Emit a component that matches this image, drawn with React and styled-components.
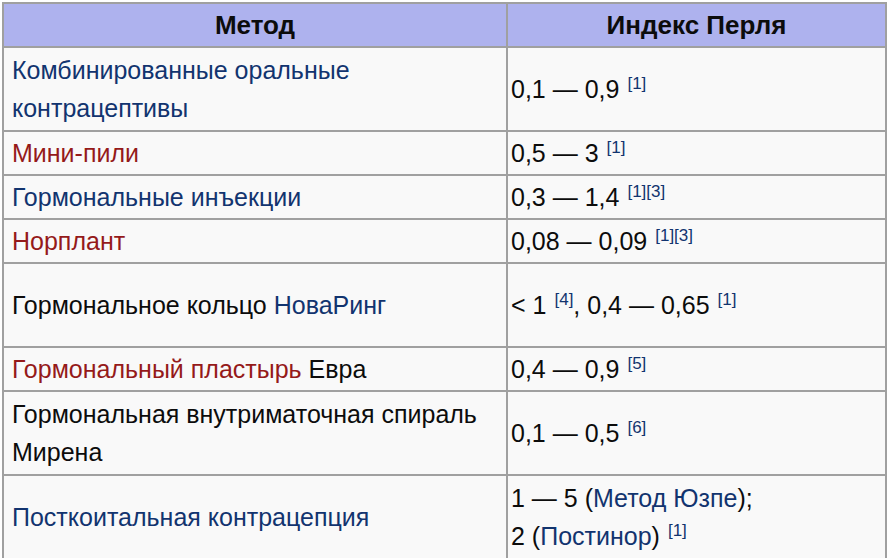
import React from 'react'
import styled, { createGlobalStyle } from 'styled-components'

const GlobalStyle = createGlobalStyle`
  html, body {
    margin: 0;
    padding: 0;
    background: #ffffff;
  }
  body {
    font-family: "Liberation Sans", Arial, sans-serif;
  }
`

const Table = styled.table`
  margin: 2px 0 0 2px;
  width: 885px;
  border-collapse: collapse;
  background: #f9f9f9;
  color: #0c0c0c;
  font-size: 25px;
  line-height: 38px;
`

const HeadCell = styled.th`
  background: #aeb2ee;
  border: 2px solid #a0a0a0;
  font-size: 26px;
  font-weight: bold;
  text-align: center;
  padding: 0 8px;
  width: ${p => p.width || 'auto'};
`

const Row = styled.tr`
  height: ${p => (p.tall ? '84px' : '44px')};
`

const Cell = styled.td`
  border: 2px solid #a0a0a0;
  padding: 1px ${p => (p.narrow ? '3px' : '8px')};
  vertical-align: middle;
  text-align: left;
`

const Link = styled.span`
  color: ${p => (p.missing ? '#951a1a' : '#12346f')};
`

const Ref = styled.sup`
  color: #12346f;
  font-size: 17px;
  line-height: 0;
  vertical-align: 9px;
  margin-left: 8px;
`

const rows = [
  {
    method: <Link>Комбинированные оральные контрацептивы</Link>,
    index: <>0,1 — 0,9<Ref>[1]</Ref></>,
    tall: true
  },
  {
    method: <Link missing>Мини-пили</Link>,
    index: <>0,5 — 3<Ref>[1]</Ref></>
  },
  {
    method: <Link>Гормональные инъекции</Link>,
    index: <>0,3 — 1,4<Ref>[1][3]</Ref></>
  },
  {
    method: <Link missing>Норплант</Link>,
    index: <>0,08 — 0,09<Ref>[1][3]</Ref></>
  },
  {
    method: <>Гормональное кольцо <Link>НоваРинг</Link></>,
    index: <>&lt; 1<Ref>[4]</Ref>, 0,4 — 0,65<Ref>[1]</Ref></>,
    tall: true
  },
  {
    method: <><Link missing>Гормональный пластырь</Link> Евра</>,
    index: <>0,4 — 0,9<Ref>[5]</Ref></>
  },
  {
    method: <>Гормональная внутриматочная спираль Мирена</>,
    index: <>0,1 — 0,5<Ref>[6]</Ref></>,
    tall: true
  },
  {
    method: <Link>Посткоитальная контрацепция</Link>,
    index: <>1 — 5 (<Link>Метод Юзпе</Link>);<br />2 (<Link>Постинор</Link>)<Ref>[1]</Ref></>,
    tall: true
  }
]

export default function App() {
  return (
    <>
      <GlobalStyle />
      <Table>
        <thead>
          <Row>
            <HeadCell width="486px">Метод</HeadCell>
            <HeadCell>Индекс Перля</HeadCell>
          </Row>
        </thead>
        <tbody>
          {rows.map((r, i) => (
            <Row key={i} tall={r.tall}>
              <Cell>{r.method}</Cell>
              <Cell narrow>{r.index}</Cell>
            </Row>
          ))}
        </tbody>
      </Table>
    </>
  )
}
